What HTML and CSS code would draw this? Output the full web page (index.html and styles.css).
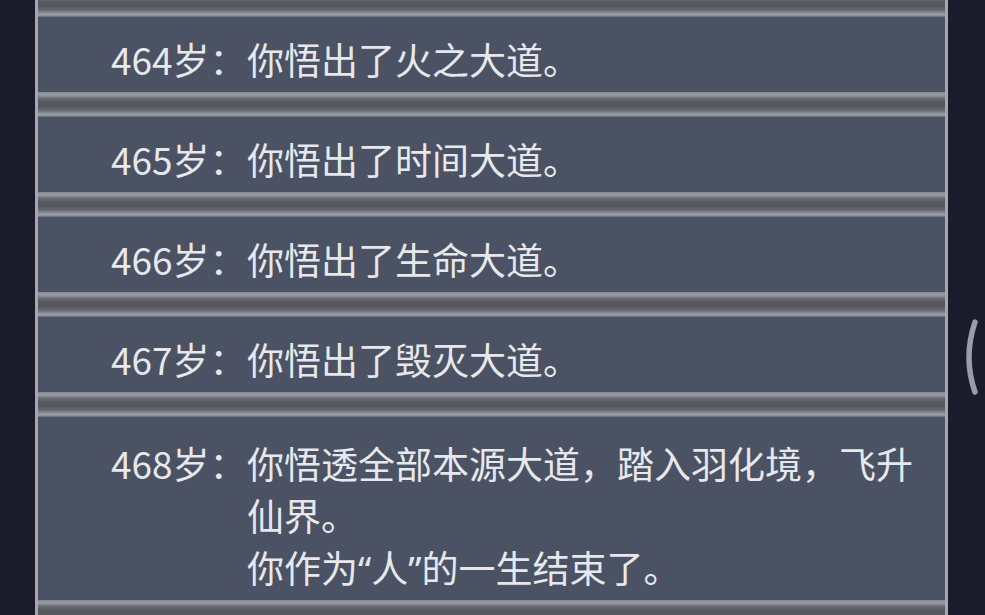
FILE: index.html
```html
<!DOCTYPE html>
<html lang="zh-CN">
<head>
<meta charset="utf-8">
<title>人生记录</title>
<link rel="stylesheet" href="styles.css">
</head>
<body>
<div class="screen">
  <div class="gutter"></div>
  <main class="panel">
    <div class="sep sep-top"></div>
    <div class="row"><span class="age">464岁：</span><span class="text">你悟出了火之大道。</span></div>
    <div class="sep"></div>
    <div class="row"><span class="age">465岁：</span><span class="text">你悟出了时间大道。</span></div>
    <div class="sep"></div>
    <div class="row"><span class="age">466岁：</span><span class="text">你悟出了生命大道。</span></div>
    <div class="sep"></div>
    <div class="row"><span class="age">467岁：</span><span class="text">你悟出了毁灭大道。</span></div>
    <div class="sep"></div>
    <div class="row row-tall"><span class="age">468岁：</span><span class="text">你悟透全部本源大道，踏入羽化境，飞升仙界。<br>你作为<span class="q">“</span>人<span class="q">”</span>的一生结束了。</span></div>
    <div class="sep"></div>
  </main>
  <aside class="side">
    <svg class="handle" width="20" height="80" viewBox="0 0 20 80">
      <path d="M14 4 Q2 40 14 74" fill="none" stroke="#9c9ca8" stroke-width="5.5" stroke-linecap="round"/>
    </svg>
  </aside>
</div>
</body>
</html>
```

FILE: styles.css
```css
html, body {
  margin: 0;
  padding: 0;
  background: #1c1b2c;
  overflow: hidden;
}

.screen {
  display: flex;
  width: 985px;
  height: 615px;
  overflow: hidden;
  font-family: "Noto Sans CJK SC", "Noto Sans", sans-serif;
}

.gutter {
  width: 35px;
  flex: none;
}

.panel {
  width: 913px;
  flex: none;
  box-sizing: border-box;
  border-left: 3px solid #a3a8b0;
  border-right: 3px solid #a3a8b0;
  background: #4a5264;
  display: flex;
  flex-direction: column;
}

.sep {
  height: 25px;
  flex: none;
  background: linear-gradient(to bottom,
    #7f848c 0px,
    #979ca4 2px,
    #8c9199 4px,
    #6b6e75 6px,
    #57595f 10px,
    #55575d 14px,
    #65686f 18px,
    #8a8f97 21px,
    #9a9fa7 22.5px,
    #868b94 24px,
    #5a6172 25px);
}

.sep-top {
  height: 17px;
  background-size: 100% 25px;
  background-position: bottom;
  background-repeat: no-repeat;
}

.row {
  height: 75px;
  flex: none;
  box-sizing: border-box;
  padding: 8px 20px 0 73px;
  display: flex;
  align-items: center;
  color: #e6e8ec;
  font-size: 37px;
  line-height: 52px;
}

.row-tall {
  height: 183px;
  padding-top: 20px;
  align-items: flex-start;
}

.age {
  width: 136px;
  flex: none;
  white-space: nowrap;
}

.text {
  flex: 1;
}

.q {
  font-family: "Noto Sans", sans-serif;
}

.side {
  flex: 1;
  position: relative;
  background: #1c1b2c;
}

.handle {
  position: absolute;
  left: 13px;
  top: 318px;
}
```
